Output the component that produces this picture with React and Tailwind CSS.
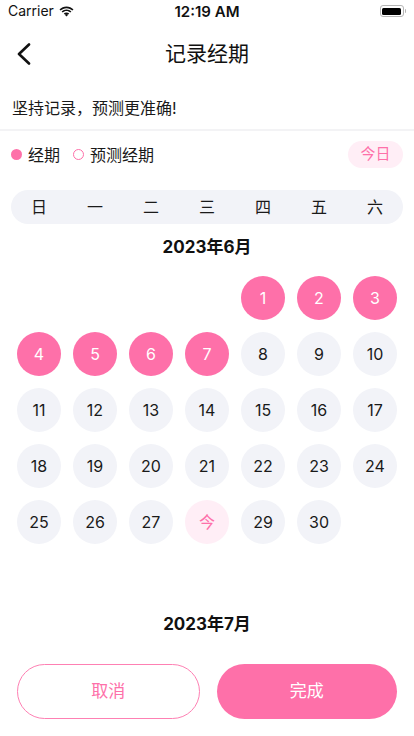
import React from "react";

const PINK = "bg-[#fe70a9]";

function StatusBar() {
  return (
    <div className="relative h-[22px] flex items-center px-[8px] text-[#111]">
      <div className="flex items-center gap-[5px]">
        <span className="text-[14px] leading-none">Carrier</span>
        <svg width="15" height="11" viewBox="0 0 15 11">
          <path d="M7.5 2.2c2.3 0 4.4.9 5.9 2.4l1.1-1.1C12.7 1.7 10.2.6 7.5.6S2.3 1.7.5 3.5l1.1 1.1C3.1 3.1 5.2 2.2 7.5 2.2z" fill="#111" />
          <path d="M7.5 5.1c1.5 0 2.8.6 3.8 1.5l1.1-1.1C11.1 4.3 9.4 3.5 7.5 3.5S3.9 4.3 2.6 5.5l1.1 1.1c1-.9 2.3-1.5 3.8-1.5z" fill="#111" />
          <path d="M7.5 8c.7 0 1.2.3 1.7.7L7.5 10.4 5.8 8.7c.5-.4 1-.7 1.7-.7z" fill="#111" />
          <path d="M7.5 6.4c1.1 0 2 .4 2.7 1.1L9.2 8.5C8.8 8.1 8.2 7.9 7.5 7.9s-1.300.2-1.7.6l-1-1c.7-.7 1.6-1.1 2.7-1.1z" fill="#111" />
        </svg>
      </div>
      <div className="absolute left-0 right-0 top-0 h-[22px] flex items-center justify-center pointer-events-none">
        <span className="text-[15px] font-semibold leading-none">12:19 AM</span>
      </div>
      <div className="ml-auto flex items-center">
        <div className="w-[24px] h-[12px] rounded-[3px] border border-[#b5b5b5] p-[1.5px]">
          <div className="w-full h-full rounded-[1.5px] bg-black" />
        </div>
        <div className="w-[1.5px] h-[4px] bg-[#b5b5b5] rounded-r-sm ml-[1px]" />
      </div>
    </div>
  );
}

function NavBar() {
  return (
    <div className="relative h-[64px] flex items-center justify-center">
      <button className="absolute left-[16px] top-[20px] w-[18px] h-[24px] flex items-center">
        <svg width="16" height="22" viewBox="0 0 16 22">
          <polyline points="13,1.5 3,11 13,20.5" fill="none" stroke="#111" strokeWidth="2.6" strokeLinecap="round" strokeLinejoin="round" />
        </svg>
      </button>
      <span className="text-[21px] text-[#111]">记录经期</span>
    </div>
  );
}

function MonthGrid({ title, offset, days, pinkSet, todayDay }) {
  const cells = [];
  for (let i = 0; i < offset; i++) cells.push(<div key={"e" + i} className="w-[44px] h-[44px]" />);
  for (let d = 1; d <= days; d++) {
    let cls = "bg-[#f2f3f8] text-[#1a1a1a]";
    let label = String(d);
    if (pinkSet.includes(d)) cls = PINK + " text-white";
    if (d === todayDay) {
      cls = "bg-[#ffeef6] text-[#fe70a9]";
      label = "今";
    }
    cells.push(
      <div key={d} className={"w-[44px] h-[44px] rounded-full flex items-center justify-center text-[16px] " + cls}>
        {label}
      </div>
    );
  }
  return (
    <div>
      <div className="h-[32px] flex items-center justify-center text-[17px] font-bold text-[#111]">{title}</div>
      {days > 0 && (
        <div className="mt-[12px] grid grid-cols-[repeat(7,44px)] gap-[12px] px-[17px]">{cells}</div>
      )}
    </div>
  );
}

export default function App() {
  const weekdays = ["日", "一", "二", "三", "四", "五", "六"];
  return (
    <div
      className="w-[414px] h-[736px] bg-white flex flex-col overflow-hidden"
      style={{ fontFamily: 'Inter, "Noto Sans CJK SC", sans-serif' }}
    >
      <StatusBar />
      <NavBar />
      <div className="h-[43px] flex items-center px-[12px] text-[16px] text-[#1a1a1a]">坚持记录，预测更准确!</div>
      <div className="h-[2px] bg-[#f3f3f5]" />
      <div className="flex-1 overflow-hidden relative">
        <div className="mt-[10px] px-[11px] flex items-center h-[27px]">
          <div className="flex items-center">
            <span className="w-[11px] h-[11px] rounded-full bg-[#fe70a9]" />
            <span className="ml-[6px] text-[16px] text-[#1a1a1a]">经期</span>
            <span className="ml-[13px] w-[11px] h-[11px] rounded-full border-[1.5px] border-[#fe70a9]" />
            <span className="ml-[6px] text-[16px] text-[#1a1a1a]">预测经期</span>
          </div>
          <div className="ml-auto w-[55px] h-[27px] rounded-full bg-[#ffeef6] text-[#fe70a9] text-[15px] flex items-center justify-center">
            今日
          </div>
        </div>
        <div className="mt-[22px] mx-[11px] h-[34px] rounded-full bg-[#f2f3f8] grid grid-cols-7">
          {weekdays.map((w) => (
            <div key={w} className="flex items-center justify-center text-[16px] text-[#1a1a1a]">{w}</div>
          ))}
        </div>
        <div className="mt-[8px]">
          <MonthGrid title="2023年6月" offset={4} days={30} pinkSet={[1, 2, 3, 4, 5, 6, 7]} todayDay={28} />
        </div>
        <div className="mt-[65px]">
          <MonthGrid title="2023年7月" offset={6} days={0} pinkSet={[]} todayDay={null} />
        </div>
      </div>
      <div className="bg-white pt-[12px] pb-[17px] px-[17px] flex gap-[17px]">
        <button className="flex-1 h-[55px] rounded-full border-[1.5px] border-[#fe80b3] text-[#fe70a9] text-[17px] bg-white">取消</button>
        <button className="flex-1 h-[55px] rounded-full bg-[#fe70a9] text-white text-[17px]">完成</button>
      </div>
    </div>
  );
}
